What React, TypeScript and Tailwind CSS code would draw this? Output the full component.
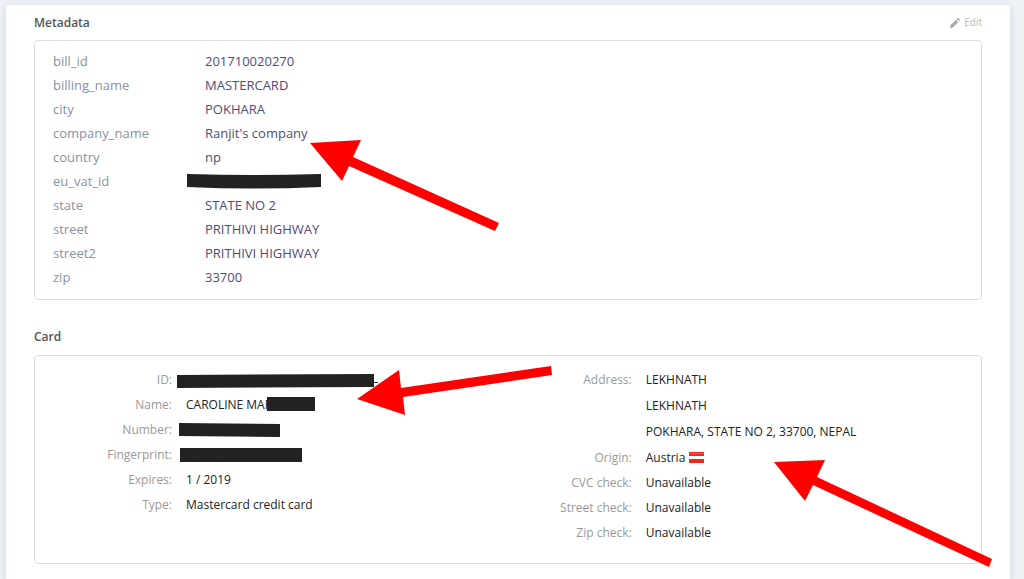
import type { ReactNode } from "react";

interface Row {
  label: string;
  value: ReactNode;
}

interface ArrowProps {
  points: string;
  viewBox: string;
  className: string;
}

function Arrow({ points, viewBox, className }: ArrowProps) {
  return (
    <svg
      viewBox={viewBox}
      className={`absolute pointer-events-none fill-[#ff0000] ${className}`}
      aria-hidden="true"
    >
      <polygon points={points} />
    </svg>
  );
}

function Redacted({ points, className }: { points: string; className: string }) {
  return (
    <svg className={`shrink-0 h-4 fill-[#222222] ${className}`} aria-hidden="true">
      <path d={points} />
    </svg>
  );
}

function Flag() {
  return (
    <svg viewBox="0 0 15 11" className="w-[15px] h-[11px]" aria-hidden="true">
      <rect width="15" height="11" fill="#f5281e" />
      <rect y="4" width="15" height="3" fill="#ffffff" />
      <rect x="1" y="1" width="13" height="1" fill="#f7685f" />
    </svg>
  );
}

const metadata: Row[] = [
  { label: "bill_id", value: "201710020270" },
  { label: "billing_name", value: "MASTERCARD" },
  { label: "city", value: "POKHARA" },
  { label: "company_name", value: "Ranjit's company" },
  { label: "country", value: "np" },
  {
    label: "eu_vat_id",
    value: (
      <Redacted
        points="M0 0 Q67 2 134 0 V13 Q67 16 0 13 Z"
        className="w-[134px] -ml-[18px]"
      />
    ),
  },
  { label: "state", value: "STATE NO 2" },
  { label: "street", value: "PRITHIVI HIGHWAY" },
  { label: "street2", value: "PRITHIVI HIGHWAY" },
  { label: "zip", value: "33700" },
];

const cardLeft: Row[] = [
  {
    label: "ID:",
    value: (
      <Redacted
        points="M0 3 L197 2 V10 H201 V11 H197 V15 L0 16 Z"
        className="w-[201px] -ml-[9px]"
      />
    ),
  },
  {
    label: "Name:",
    value: (
      <>
        CAROLINE MAR
        <Redacted points="M0 0 H48 V14 H0 Z" className="w-12 -ml-[5px]" />
      </>
    ),
  },
  {
    label: "Number:",
    value: (
      <Redacted points="M0 1 L101 2 V15 L0 14 Z" className="w-[101px] -ml-[7px]" />
    ),
  },
  {
    label: "Fingerprint:",
    value: <Redacted points="M0 1 H122 V15 H0 Z" className="w-[122px] -ml-[6px]" />,
  },
  { label: "Expires:", value: "1 / 2019" },
  { label: "Type:", value: "Mastercard credit card" },
];

const cardRight: Row[] = [
  {
    label: "Origin:",
    value: (
      <>
        Austria
        <span className="ml-1">
          <Flag />
        </span>
      </>
    ),
  },
  { label: "CVC check:", value: "Unavailable" },
  { label: "Street check:", value: "Unavailable" },
  { label: "Zip check:", value: "Unavailable" },
];

function CardRow({ label, value }: Row) {
  return (
    <div className="flex h-[25px] items-center">
      <dt className="w-[137px] shrink-0 text-right text-[#999999]">{label}</dt>
      <dd className="ml-[14px] flex items-center whitespace-nowrap text-[#222222]">
        {value}
      </dd>
    </div>
  );
}

export default function App() {
  return (
    <div className="min-h-screen bg-[#edf2f7] pt-[5px] pl-[6px] pr-[14px] font-['Open_Sans',sans-serif]">
      <main className="min-h-[574px] rounded-t bg-white px-7 pb-4 shadow-[0_2px_8px_rgba(60,80,110,0.18)]">
        {/* metadata */}
        <section className="relative">
          <div className="flex h-[35px] items-center justify-between">
            <h2 className="text-[12px] font-semibold text-[#555555]">Metadata</h2>
            <button className="flex items-center gap-1 text-[10px] text-[#bbbbbb]">
              <svg viewBox="0 0 10 10" className="size-[10px] fill-[#aaaaaa]" aria-hidden="true">
                <path d="M0 10 L0.6 7.1 L6 1.7 L8.3 4 L2.9 9.4 Z M6.7 1 L7.4 0.3 Q8 -0.2 8.6 0.3 L9.7 1.4 Q10.2 2 9.7 2.6 L9 3.3 Z" />
              </svg>
              Edit
            </button>
          </div>
          <dl className="rounded border border-[#dddddd] px-[18px] py-[9px] text-[13px]">
            {metadata.map((row) => (
              <div className="flex h-6 items-center" key={row.label}>
                <dt className="w-[152px] shrink-0 text-[#8792a8]">{row.label}</dt>
                <dd className="text-[#4f4b78]">{row.value}</dd>
              </div>
            ))}
          </dl>
          <Arrow
            viewBox="0 0 190 92"
            points="0,3 51,0 43,17 189,83 185,91 39,26 32,41"
            className="left-[276px] top-[135px] w-[190px] h-[92px]"
          />
        </section>

        {/* card */}
        <section className="relative mt-[18px]">
          <h2 className="flex h-[37px] items-center text-[12px] font-semibold text-[#555555]">
            Card
          </h2>
          <div className="flex rounded border border-[#dddddd] pt-[11px] pb-[18px] text-[12px]">
            <dl className="w-[48.6%]">
              {cardLeft.map((row) => (
                <CardRow {...row} key={row.label} />
              ))}
            </dl>
            <dl className="flex-1">
              <div className="flex">
                <dt className="w-[137px] shrink-0 text-right leading-[25px] text-[#999999]">
                  Address:
                </dt>
                <dd className="ml-[14px] leading-[26px] text-[#222222]">
                  <p>LEKHNATH</p>
                  <p>LEKHNATH</p>
                  <p>POKHARA, STATE NO 2, 33700, NEPAL</p>
                </dd>
              </div>
              {cardRight.map((row) => (
                <CardRow {...row} key={row.label} />
              ))}
            </dl>
          </div>
          <Arrow
            viewBox="0 0 195 50"
            points="0,29 42,0 44,18 194,-4 195,5 46,27 48,45"
            className="left-[323px] top-[52px] w-[195px] h-[50px] overflow-visible"
          />
          <Arrow
            viewBox="0 0 219 108"
            points="0,2 51,0 43,17 218,99 215,107 39,25 31,41"
            className="-right-[11px] top-[142px] w-[219px] h-[108px]"
          />
        </section>
      </main>
    </div>
  );
}
